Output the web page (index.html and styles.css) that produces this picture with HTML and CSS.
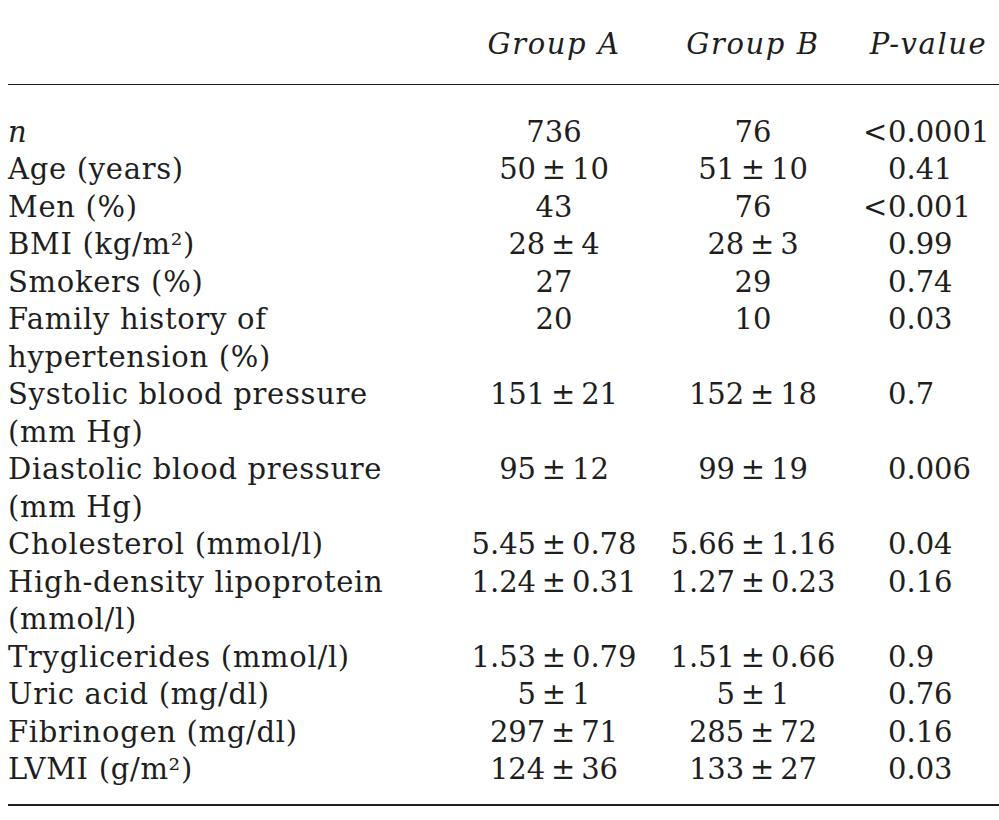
FILE: index.html
```html
<!DOCTYPE html>
<html lang="en">
<head>
<meta charset="utf-8">
<title>Table</title>
<link rel="stylesheet" href="styles.css">
</head>
<body>
<div class="table">
  <div class="row head">
    <div class="label"></div>
    <div class="num">Group A</div>
    <div class="num">Group B</div>
    <div class="pv">P-value</div>
  </div>
  <div class="rule-top"></div>
  <div class="body">
    <div class="row"><div class="label"><i>n</i></div><div class="num">736</div><div class="num">76</div><div class="p"><span class="lt">&lt;</span>0.0001</div></div>
    <div class="row"><div class="label">Age (years)</div><div class="num">50&thinsp;±&thinsp;10</div><div class="num">51&thinsp;±&thinsp;10</div><div class="p">0.41</div></div>
    <div class="row"><div class="label">Men (%)</div><div class="num">43</div><div class="num">76</div><div class="p"><span class="lt">&lt;</span>0.001</div></div>
    <div class="row"><div class="label">BMI (kg/m²)</div><div class="num">28&thinsp;±&thinsp;4</div><div class="num">28&thinsp;±&thinsp;3</div><div class="p">0.99</div></div>
    <div class="row"><div class="label">Smokers (%)</div><div class="num">27</div><div class="num">29</div><div class="p">0.74</div></div>
    <div class="row"><div class="label">Family history of<br>hypertension (%)</div><div class="num">20</div><div class="num">10</div><div class="p">0.03</div></div>
    <div class="row"><div class="label">Systolic blood pressure<br>(mm Hg)</div><div class="num">151&thinsp;±&thinsp;21</div><div class="num">152&thinsp;±&thinsp;18</div><div class="p">0.7</div></div>
    <div class="row"><div class="label">Diastolic blood pressure<br>(mm Hg)</div><div class="num">95&thinsp;±&thinsp;12</div><div class="num">99&thinsp;±&thinsp;19</div><div class="p">0.006</div></div>
    <div class="row"><div class="label">Cholesterol (mmol/l)</div><div class="num">5.45&thinsp;±&thinsp;0.78</div><div class="num">5.66&thinsp;±&thinsp;1.16</div><div class="p">0.04</div></div>
    <div class="row"><div class="label">High-density lipoprotein<br>(mmol/l)</div><div class="num">1.24&thinsp;±&thinsp;0.31</div><div class="num">1.27&thinsp;±&thinsp;0.23</div><div class="p">0.16</div></div>
    <div class="row"><div class="label">Tryglicerides (mmol/l)</div><div class="num">1.53&thinsp;±&thinsp;0.79</div><div class="num">1.51&thinsp;±&thinsp;0.66</div><div class="p">0.9</div></div>
    <div class="row"><div class="label">Uric acid (mg/dl)</div><div class="num">5&thinsp;±&thinsp;1</div><div class="num">5&thinsp;±&thinsp;1</div><div class="p">0.76</div></div>
    <div class="row"><div class="label">Fibrinogen (mg/dl)</div><div class="num">297&thinsp;±&thinsp;71</div><div class="num">285&thinsp;±&thinsp;72</div><div class="p">0.16</div></div>
    <div class="row"><div class="label">LVMI (g/m²)</div><div class="num">124&thinsp;±&thinsp;36</div><div class="num">133&thinsp;±&thinsp;27</div><div class="p">0.03</div></div>
  </div>
  <div class="rule-bottom"></div>
</div>
</body>
</html>
```
FILE: styles.css
```css
html, body {
  margin: 0;
  padding: 0;
  background: #ffffff;
}
body {
  font-family: "DejaVu Serif", "Liberation Serif", serif;
  font-size: 29px;
  line-height: 37.5px;
  color: #1e1e1e;
}
.table {
  margin-left: 8px;
  width: 991px;
}
.row {
  display: grid;
  grid-template-columns: 452px 188px 210px 141px;
  align-items: start;
}
.label {
  letter-spacing: 0.7px;
}
.head {
  padding-top: 26px;
  font-style: italic;
  letter-spacing: 1.6px;
}
.num {
  text-align: center;
  white-space: nowrap;
}
.pv {
  text-align: center;
}
.p {
  padding-left: 30px;
  white-space: nowrap;
}
.lt {
  display: inline-block;
  width: 25px;
  margin-left: -25px;
}
.rule-top {
  margin-top: 20px;
  height: 1px;
  background: #1e1e1e;
}
.body {
  padding-top: 29px;
}
.rule-bottom {
  margin-top: 15px;
  height: 2px;
  background: #1e1e1e;
}
```
